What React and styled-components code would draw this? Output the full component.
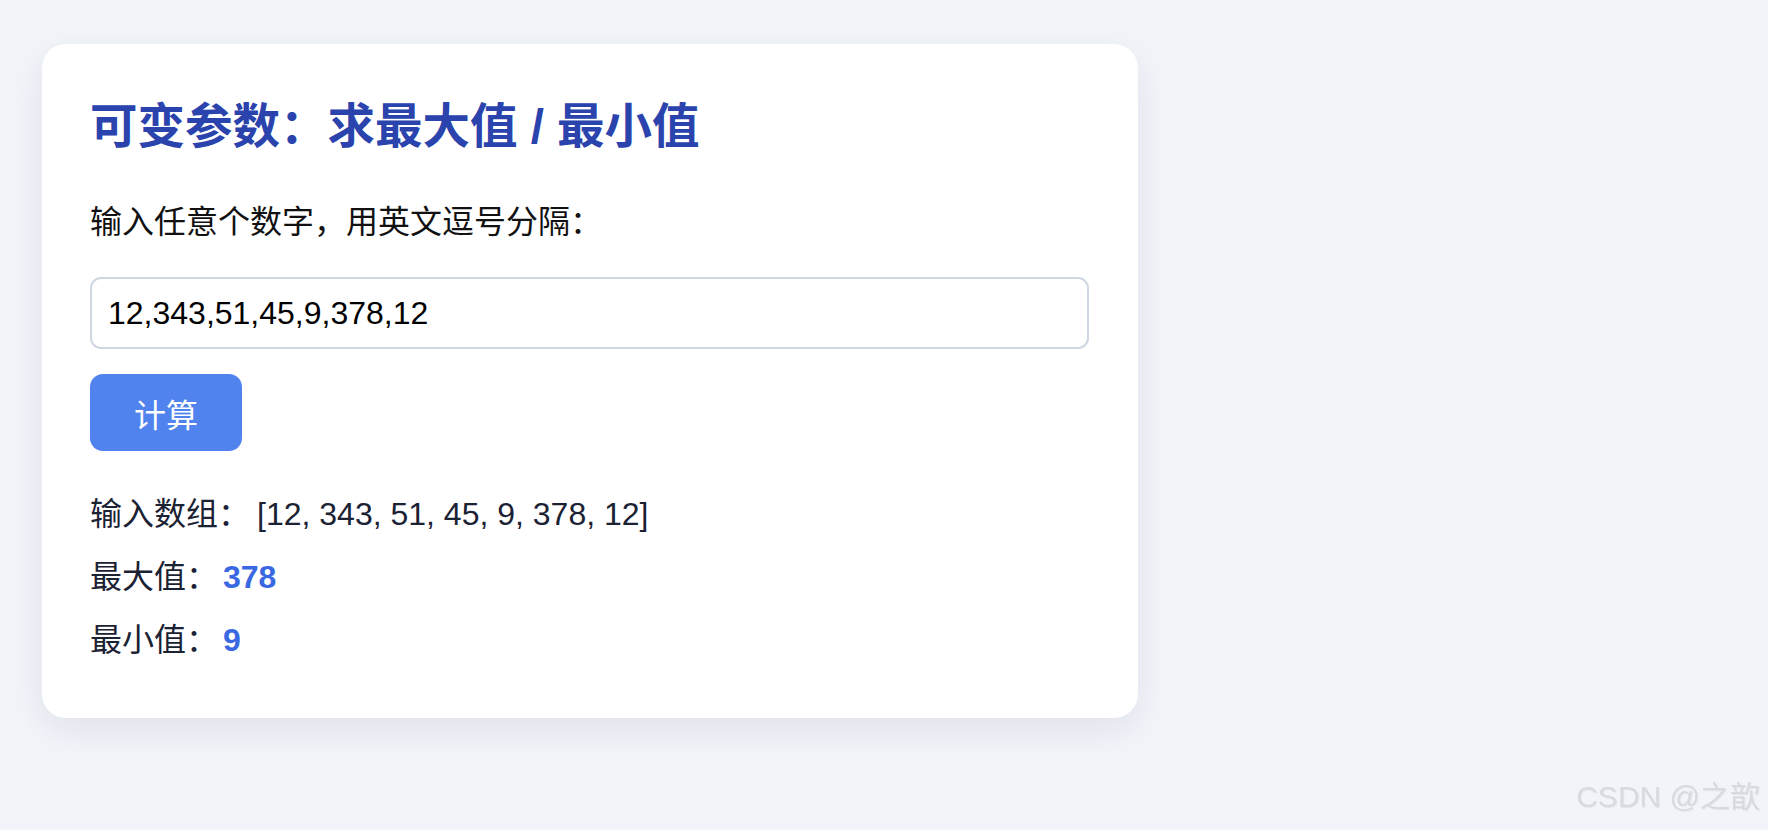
import React, { useState } from 'react';
import styled, { createGlobalStyle } from 'styled-components';

const parseNumbers = text =>
  text
    .split(',')
    .map(s => s.trim())
    .filter(s => s !== '')
    .map(Number)
    .filter(n => !Number.isNaN(n));

// 可变参数
const getMax = (...nums) => Math.max(...nums);
const getMin = (...nums) => Math.min(...nums);

function App() {
  const [text, setText] = useState('12,343,51,45,9,378,12');
  const [nums, setNums] = useState(parseNumbers('12,343,51,45,9,378,12'));

  const onCalc = () => {
    setNums(parseNumbers(text));
  };

  return (
    <Page>
      <GlobalStyle />
      <Card>
        <Title>可变参数：求最大值 / 最小值</Title>
        <Label htmlFor="nums">输入任意个数字，用英文逗号分隔：</Label>
        <Input
          id="nums"
          value={text}
          onChange={e => setText(e.target.value)}
        />
        <CalcButton type="button" onClick={onCalc}>
          计算
        </CalcButton>
        <Results>
          <Row>
            输入数组：<ArrayText>[{nums.join(', ')}]</ArrayText>
          </Row>
          <Row>
            最大值：<Value>{nums.length ? getMax(...nums) : '-'}</Value>
          </Row>
          <Row>
            最小值：<Value>{nums.length ? getMin(...nums) : '-'}</Value>
          </Row>
        </Results>
      </Card>
      <Watermark>CSDN @之歆</Watermark>
    </Page>
  );
}

export default App;

/* CSS */
const GlobalStyle = createGlobalStyle`
  html, body {
    margin: 0;
    padding: 0;
    background: #f1f4f9;
    font-family: "Liberation Sans", "Noto Sans CJK SC", sans-serif;
  }
`;

const Page = styled.div`
  min-height: 830px;
  padding: 44px 0 0 42px;
  box-sizing: border-box;
`;

const Card = styled.div`
  width: 1096px;
  box-sizing: border-box;
  padding: 55px 49px 54px 48px;
  background: #ffffff;
  border-radius: 24px;
  box-shadow: 0 12px 36px rgba(30, 41, 59, 0.08);

  display: flex;
  flex-direction: column;
  align-items: flex-start;
`;

const Title = styled.h1`
  margin: 0;
  font-size: 47.5px;
  line-height: 56px;
  font-weight: 700;
  color: #2a43ad;
`;

const Label = styled.label`
  margin-top: 43px;
  font-size: 32px;
  line-height: 48px;
  color: #111111;
`;

const Input = styled.input`
  width: 100%;
  height: 72px;
  margin-top: 31px;
  padding: 0 16px;
  box-sizing: border-box;
  font-family: inherit;
  font-size: 32px;
  color: #000;
  border: 2px solid #cfd7e3;
  border-radius: 11px;
  outline: none;
`;

const CalcButton = styled.button`
  width: 152px;
  height: 77px;
  margin-top: 25px;
  font-family: inherit;
  font-size: 32px;
  color: #ffffff;
  background: #5083ed;
  border: none;
  border-radius: 13px;
  cursor: pointer;
`;

const Results = styled.div`
  margin-top: 39px;
  display: flex;
  flex-direction: column;
  gap: 15px;
`;

const Row = styled.div`
  font-size: 32px;
  line-height: 48px;
  color: #1b2234;
`;

const ArrayText = styled.span`
  margin-left: 7px;
`;

const Value = styled.b`
  margin-left: 5px;
  font-weight: 700;
  color: #3a68e3;
`;

const Watermark = styled.div`
  position: fixed;
  right: 8px;
  bottom: 14px;
  font-size: 30px;
  color: #d9dadd;
  text-shadow: 1px 1px 0 rgba(0, 0, 0, 0.06);
  pointer-events: none;
`;
